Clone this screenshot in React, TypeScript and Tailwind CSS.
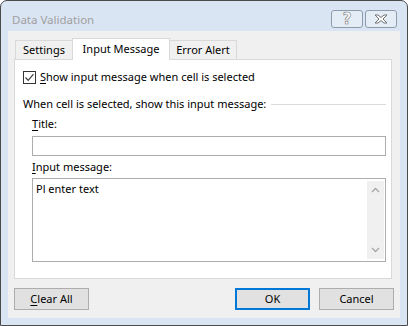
import React from "react";

const font = "font-['Noto_Sans','Open_Sans',sans-serif]";

function TitleButton({ children }: { children: React.ReactNode }) {
  return (
    <div className="w-[32px] h-[18px] rounded-[3px] border border-[#8e9bac] bg-[#e4ecf6] flex items-center justify-center">
      {children}
    </div>
  );
}

function Tab({ label, active, className }: { label: string; active?: boolean; className: string }) {
  return (
    <div
      className={
        "flex items-center justify-center border-[#d9d9d9] text-[11px] text-black " +
        (active
          ? "h-[22px] -mb-px bg-white border-t border-l border-r relative z-10 pb-px "
          : "h-[19px] bg-[#f0f0f0] border-t ") +
        className
      }
    >
      {label}
    </div>
  );
}

function Button({ children, primary }: { children: React.ReactNode; primary?: boolean }) {
  return (
    <div
      className={
        "w-[75px] h-[22px] flex items-center justify-center bg-[#e1e1e1] text-[11px] text-black " +
        (primary ? "border-2 border-[#0078d7]" : "border border-[#adadad]")
      }
    >
      {children}
    </div>
  );
}

export default function App() {
  return (
    <div className={`w-[408px] h-[326px] flex flex-col bg-[#dae5f3] border border-[#4b4b4b] rounded-t-[7px] overflow-hidden ${font}`}>
      {/* Title bar */}
      <div className="h-[30px] flex items-start shrink-0">
        <div className="pl-[11px] pt-[10px] text-[11.5px] leading-[18px] text-[#a0a0a0] flex-1">Data Validation</div>
        <div className="flex gap-[2px] pt-[9px] pr-[10px]">
          <TitleButton>
            <span className="text-[15px] leading-none font-['DejaVu_Sans',sans-serif] font-bold text-white [-webkit-text-stroke:0.6px_#7a7a7a]">?</span>
          </TitleButton>
          <TitleButton>
            <svg width="14" height="10" viewBox="0 0 14 10">
              <path
                d="M1 1 L4 1 L7 3.5 L10 1 L13 1 L9 5 L13 9 L10 9 L7 6.5 L4 9 L1 9 L5 5 Z"
                fill="#ffffff"
                stroke="#707070"
                strokeWidth="1"
                strokeLinejoin="round"
              />
            </svg>
          </TitleButton>
        </div>
      </div>

      {/* Client area */}
      <div className="mx-[7px] mb-[7px] flex-1 bg-[#f0f0f0] flex flex-col">
        <div className="pl-[6px] pr-[8px] pt-[7px]">
          <div className="h-[21px] flex items-end pl-px">
            <Tab label="Settings" className="w-[57px] border-l" />
            <Tab label="Input Message" active className="w-[98px]" />
            <Tab label="Error Alert" className="w-[67px] border-r" />
          </div>

          {/* Panel */}
          <div className="h-[220px] bg-white border border-[#d9d9d9] flex flex-col text-[11px] text-black">
            <div className="flex items-center pl-[8px] pt-[10px] h-[24px]">
              <div className="w-[13px] h-[13px] border border-[#333333] bg-white flex items-center justify-center">
                <svg width="11" height="11" viewBox="0 0 11 11">
                  <path d="M1.5 5.5 L4.2 8.3 L9.5 2.2" fill="none" stroke="#3c3c3c" strokeWidth="1.2" />
                </svg>
              </div>
              <span className="ml-[4px] leading-[16px]">
                <u className="underline-offset-2">S</u>how input message when cell is selected
              </span>
            </div>

            <div className="flex items-center pl-[8px] pr-[5px] mt-[12px] h-[16px]">
              <span className="whitespace-nowrap">When cell is selected, show this input message:</span>
              <div className="flex-1 h-px bg-[#dcdcdc] ml-[5px]" />
            </div>

            <div className="pl-[17px] pr-[5px] flex flex-col">
              <div className="mt-[4px] h-[16px] leading-[16px]">
                <u className="underline-offset-2">T</u>itle:
              </div>
              <div className="mt-[4px] h-[20px] border border-[#adadad] bg-white" />
              <div className="mt-[3px] h-[16px] leading-[16px]">
                <u className="underline-offset-2">I</u>nput message:
              </div>
              <div className="mt-[3px] h-[84px] border border-[#adadad] bg-white flex">
                <div className="flex-1 pl-[3px] pt-[2px] leading-[16px]">Pl enter text</div>
                <div className="w-[17px] my-[2px] mr-px bg-[#f0f0f0] flex flex-col items-center justify-between py-[6px]">
                  <svg width="9" height="6" viewBox="0 0 9 6">
                    <path d="M1 5 L4.5 1.5 L8 5" fill="none" stroke="#a6a6a6" strokeWidth="1.3" />
                  </svg>
                  <svg width="9" height="6" viewBox="0 0 9 6">
                    <path d="M1 1 L4.5 4.5 L8 1" fill="none" stroke="#a6a6a6" strokeWidth="1.3" />
                  </svg>
                </div>
              </div>
            </div>
          </div>
        </div>

        {/* Buttons */}
        <div className="flex items-center pl-[6px] pr-[6px] mt-[9px]">
          <Button>
            <u className="underline-offset-2">C</u>lear All
          </Button>
          <div className="flex-1" />
          <Button primary>OK</Button>
          <div className="w-[9px]" />
          <Button>Cancel</Button>
        </div>
      </div>
    </div>
  );
}
